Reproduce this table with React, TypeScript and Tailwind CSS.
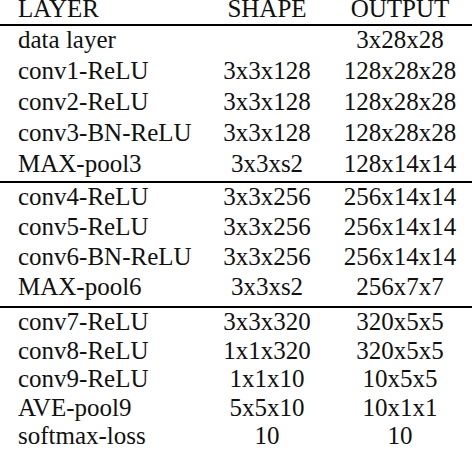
const sections: { rows: [string, string, string][]; rowClass: string; pad: string }[] = [
  {
    rowClass: "h-[31px]",
    pad: "pb-0",
    rows: [
      ["data layer", "", "3x28x28"],
      ["conv1-ReLU", "3x3x128", "128x28x28"],
      ["conv2-ReLU", "3x3x128", "128x28x28"],
      ["conv3-BN-ReLU", "3x3x128", "128x28x28"],
      ["MAX-pool3", "3x3xs2", "128x14x14"],
    ],
  },
  {
    rowClass: "h-[30px]",
    pad: "pb-[3px]",
    rows: [
      ["conv4-ReLU", "3x3x256", "256x14x14"],
      ["conv5-ReLU", "3x3x256", "256x14x14"],
      ["conv6-BN-ReLU", "3x3x256", "256x14x14"],
      ["MAX-pool6", "3x3xs2", "256x7x7"],
    ],
  },
  {
    rowClass: "h-[28.5px]",
    pad: "pb-0",
    rows: [
      ["conv7-ReLU", "3x3x320", "320x5x5"],
      ["conv8-ReLU", "1x1x320", "320x5x5"],
      ["conv9-ReLU", "1x1x10", "10x5x5"],
      ["AVE-pool9", "5x5x10", "10x1x1"],
      ["softmax-loss", "10", "10"],
    ],
  },
]

// serif cell, font set on each text element
function Cell({ children, left }: { children: string; left?: boolean }) {
  return (
    <div
      className={`font-['Liberation_Serif'] text-[25px] text-[#111] whitespace-nowrap ${
        left ? "pl-[18px]" : "text-center"
      }`}
    >
      {children}
    </div>
  )
}

function Row({ cells, className }: { cells: [string, string, string]; className: string }) {
  return (
    <div className={`grid grid-cols-[200px_134px_132px] leading-[27px] ${className}`}>
      <Cell left>{cells[0]}</Cell>
      <Cell>{cells[1]}</Cell>
      <Cell>{cells[2]}</Cell>
    </div>
  )
}

export default function App() {
  return (
    <div className="w-[474px] h-[450px] overflow-hidden bg-white">
      <div className="-mt-[6px] w-[472px]">
        {/* header */}
        <div className="grid grid-cols-[200px_134px_132px] leading-[30px] border-b-2 border-black">
          <Cell left>LAYER</Cell>
          <Cell>SHAPE</Cell>
          <Cell>OUTPUT</Cell>
        </div>

        {sections.map((s, i) => (
          <div key={i} className={`${s.pad} ${i < sections.length - 1 ? "border-b-2 border-black" : ""}`}>
            {s.rows.map((r, j) => (
              <Row key={j} cells={r} className={s.rowClass} />
            ))}
          </div>
        ))}
      </div>
    </div>
  )
}
